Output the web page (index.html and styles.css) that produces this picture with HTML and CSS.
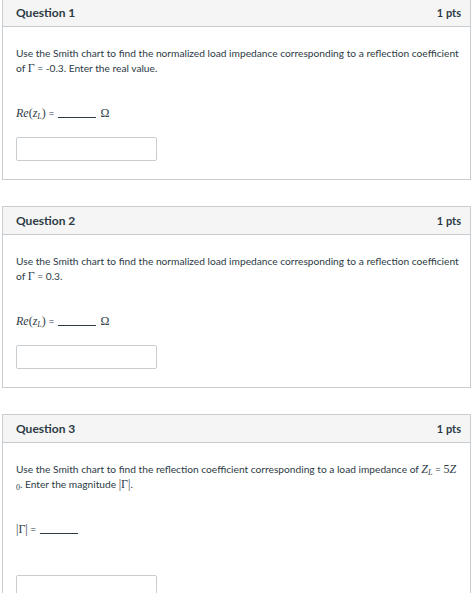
FILE: index.html
```html
<!DOCTYPE html>
<html>
<head>
<meta charset="utf-8">
<link rel="stylesheet" href="styles.css">
</head>
<body>
<div class="page">
  <div class="card">
    <div class="card-head"><span class="q-title">Question 1</span><span class="q-pts">1 pts</span></div>
    <div class="card-body">
      <p class="q-text">Use the Smith chart to find the normalized load impedance corresponding to a reflection coefficient of <span class="m">Γ</span> = -0.3. Enter the real value.</p>
      <p class="q-eq"><span class="m mi">Re</span><span class="m">(</span><span class="m mi">z</span><sub class="m mi sub">L</sub><span class="m">)</span> = <span class="blank"></span> <span class="m omega">Ω</span></p>
      <div class="answer"></div>
    </div>
  </div>
  <div class="card">
    <div class="card-head"><span class="q-title">Question 2</span><span class="q-pts">1 pts</span></div>
    <div class="card-body">
      <p class="q-text">Use the Smith chart to find the normalized load impedance corresponding to a reflection coefficient of <span class="m">Γ</span> = 0.3.</p>
      <p class="q-eq"><span class="m mi">Re</span><span class="m">(</span><span class="m mi">z</span><sub class="m mi sub">L</sub><span class="m">)</span> = <span class="blank"></span> <span class="m omega">Ω</span></p>
      <div class="answer"></div>
    </div>
  </div>
  <div class="card">
    <div class="card-head"><span class="q-title">Question 3</span><span class="q-pts">1 pts</span></div>
    <div class="card-body">
      <p class="q-text">Use the Smith chart to find the reflection coefficient corresponding to a load impedance of <span class="m mi">Z</span><sub class="m mi sub">L</sub> = <span class="m">5</span><span class="m mi">Z</span><br><sub class="m sub">0</sub>. Enter the magnitude <span class="m">|Γ|</span>.</p>
      <p class="q-eq"><span class="m">|Γ|</span> = <span class="blank"></span></p>
      <div class="answer answer-far"></div>
    </div>
  </div>
</div>
</body>
</html>
```
FILE: styles.css
```css
html, body {
  margin: 0;
  padding: 0;
  background: #ffffff;
}
body {
  font-family: Lato, "Liberation Sans", sans-serif;
  color: #2d3b45;
}
.page {
  margin-top: -2px;
  padding: 0 3px 0 2px;
}
.card {
  border: 1px solid #c7cdd1;
  margin-bottom: 26px;
  background: #fff;
}
.card-head {
  height: 27px;
  background: #f5f5f5;
  border-bottom: 1px solid #c7cdd1;
  display: flex;
  align-items: center;
  justify-content: space-between;
  padding: 0 9px 0 13px;
}
.q-title {
  font-weight: 700;
  font-size: 12px;
  color: #2d3b45;
}
.q-pts {
  font-weight: 700;
  font-size: 11px;
  color: #2d3b45;
}
.card-body {
  padding: 19px 4px 18px 13px;
}
.q-text {
  margin: 0;
  font-size: 10.2px;
  line-height: 15px;
}
.q-eq {
  margin: 30px 0 0 0;
  font-size: 10.2px;
  line-height: 15px;
}
.m {
  font-family: "Liberation Serif", "DejaVu Serif", serif;
  font-size: 12px;
  line-height: 1;
}
.mi {
  font-style: italic;
}
.sub {
  font-size: 8px;
  vertical-align: -2px;
  line-height: 0;
}
.blank {
  display: inline-block;
  width: 38px;
  border-bottom: 1px solid #2d3b45;
  vertical-align: -1px;
  margin-left: 1px;
}
.omega {
  margin-left: 2px;
}
.answer {
  margin-top: 16px;
  width: 139px;
  height: 22px;
  border: 1px solid #c7cdd1;
  border-radius: 2px;
  background: #fff;
}
.answer-far {
  margin-top: 38px;
}
```
